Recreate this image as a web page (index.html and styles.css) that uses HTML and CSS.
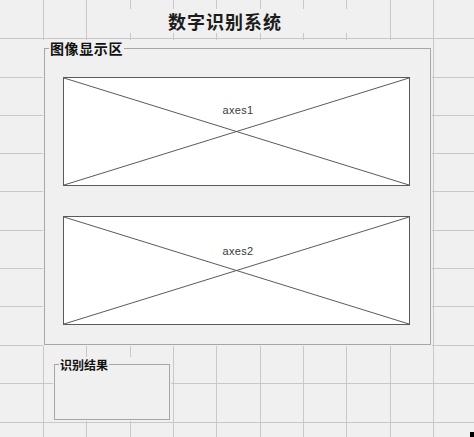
FILE: index.html
```html
<!DOCTYPE html>
<html lang="zh-CN">
<head>
<meta charset="utf-8">
<title>数字识别系统</title>
<link rel="stylesheet" href="styles.css">
</head>
<body>
<div class="canvas">
  <div class="title">数字识别系统</div>

  <div class="panel panel-main">
    <span class="legend legend-main">图像显示区</span>
    <div class="frame frame-main">
      <div class="axes">
        <svg class="cross" viewBox="0 0 100 100" preserveAspectRatio="none">
          <line x1="0" y1="0" x2="100" y2="100" vector-effect="non-scaling-stroke"/>
          <line x1="0" y1="100" x2="100" y2="0" vector-effect="non-scaling-stroke"/>
        </svg>
        <span class="axes-label">axes1</span>
      </div>
      <div class="axes">
        <svg class="cross" viewBox="0 0 100 100" preserveAspectRatio="none">
          <line x1="0" y1="0" x2="100" y2="100" vector-effect="non-scaling-stroke"/>
          <line x1="0" y1="100" x2="100" y2="0" vector-effect="non-scaling-stroke"/>
        </svg>
        <span class="axes-label label-2">axes2</span>
      </div>
    </div>
  </div>

  <div class="panel panel-result">
    <span class="legend legend-result">识别结果</span>
    <div class="frame frame-result"></div>
  </div>

  <span class="handle"></span>
</div>
</body>
</html>
```
FILE: styles.css
```css
html, body {
  margin: 0;
  padding: 0;
}

body {
  width: 474px;
  height: 437px;
  overflow: hidden;
  background-color: #f0f0f0;
  font-family: "Noto Sans CJK SC", "Noto Sans", sans-serif;
}

.canvas {
  position: relative;
  width: 474px;
  height: 437px;
  box-sizing: border-box;
  padding-top: 9px;
  --g: #c8c8c8;
  background-color: #f0f0f0;
  background-image:
    linear-gradient(var(--g), var(--g)), linear-gradient(var(--g), var(--g)),
    linear-gradient(var(--g), var(--g)), linear-gradient(var(--g), var(--g)),
    linear-gradient(var(--g), var(--g)), linear-gradient(var(--g), var(--g)),
    linear-gradient(var(--g), var(--g)), linear-gradient(var(--g), var(--g)),
    linear-gradient(var(--g), var(--g)), linear-gradient(var(--g), var(--g)),
    linear-gradient(var(--g), var(--g)), linear-gradient(var(--g), var(--g)),
    linear-gradient(var(--g), var(--g)), linear-gradient(var(--g), var(--g)),
    linear-gradient(var(--g), var(--g)), linear-gradient(var(--g), var(--g)),
    linear-gradient(var(--g), var(--g)), linear-gradient(var(--g), var(--g)),
    linear-gradient(var(--g), var(--g)), linear-gradient(var(--g), var(--g)),
    linear-gradient(var(--g), var(--g));
  background-repeat: no-repeat;
  background-size:
    1px 100%, 1px 100%, 1px 100%, 1px 100%, 1px 100%,
    1px 100%, 1px 100%, 1px 100%, 1px 100%, 1px 100%,
    100% 1px, 100% 1px, 100% 1px, 100% 1px, 100% 1px, 100% 1px,
    100% 1px, 100% 1px, 100% 1px, 100% 1px, 100% 1px;
  background-position:
    43px 0, 86px 0, 130px 0, 173px 0, 216px 0,
    260px 0, 303px 0, 346px 0, 390px 0, 433px 0,
    0 38px, 0 77px, 0 115px, 0 153px, 0 191px, 0 230px,
    0 268px, 0 306px, 0 345px, 0 383px, 0 422px;
}

.title {
  margin-left: 95px;
  width: 260px;
  height: 24px;
  background: #f0f0f0;
  font-size: 18px;
  line-height: 24px;
  font-weight: bold;
  letter-spacing: 1px;
  text-align: center;
  color: #1c1c1c;
}

.panel {
  position: relative;
  background: #f0f0f0;
}

.panel-main {
  margin: 7px 0 0 43px;
  width: 389px;
  box-sizing: border-box;
  padding: 8px 1px 1px 1px;
}

.panel-result {
  margin: 11px 0 0 53px;
  width: 118px;
  box-sizing: border-box;
  padding: 7px 1px 1px 1px;
}

.frame {
  border: 1px solid #a6a6a6;
}

.frame-main {
  padding: 28px 20px 19px 18px;
  display: flex;
  flex-direction: column;
  gap: 30px;
}

.frame-result {
  height: 54px;
}

.legend {
  position: absolute;
  top: 0;
  background: #f0f0f0;
  padding: 0 1px;
  font-weight: bold;
  color: #111;
  white-space: nowrap;
}

.legend-main {
  left: 6px;
  font-size: 14px;
  line-height: 16px;
  letter-spacing: 0.6px;
}

.legend-result {
  left: 6px;
  top: 1px;
  font-size: 12px;
  line-height: 14px;
}

.axes {
  position: relative;
  height: 109px;
  box-sizing: border-box;
  border: 1px solid #5a5a5a;
  background: #ffffff;
  display: flex;
  justify-content: center;
}

.cross {
  position: absolute;
  left: 0;
  top: 0;
  width: 100%;
  height: 100%;
}

.cross line {
  stroke: #5a5a5a;
  stroke-width: 1;
}

.axes-label {
  position: relative;
  margin-top: 25px;
  margin-left: 3px;
  height: 14px;
  font-family: "Liberation Sans", Arial, sans-serif;
  font-size: 11px;
  line-height: 14px;
  letter-spacing: 0.3px;
  color: #3a3a3a;
}

.label-2 {
  margin-top: 27px;
}

.handle {
  position: absolute;
  right: 0;
  bottom: 0;
  width: 4px;
  height: 5px;
  background: #000;
}
```
